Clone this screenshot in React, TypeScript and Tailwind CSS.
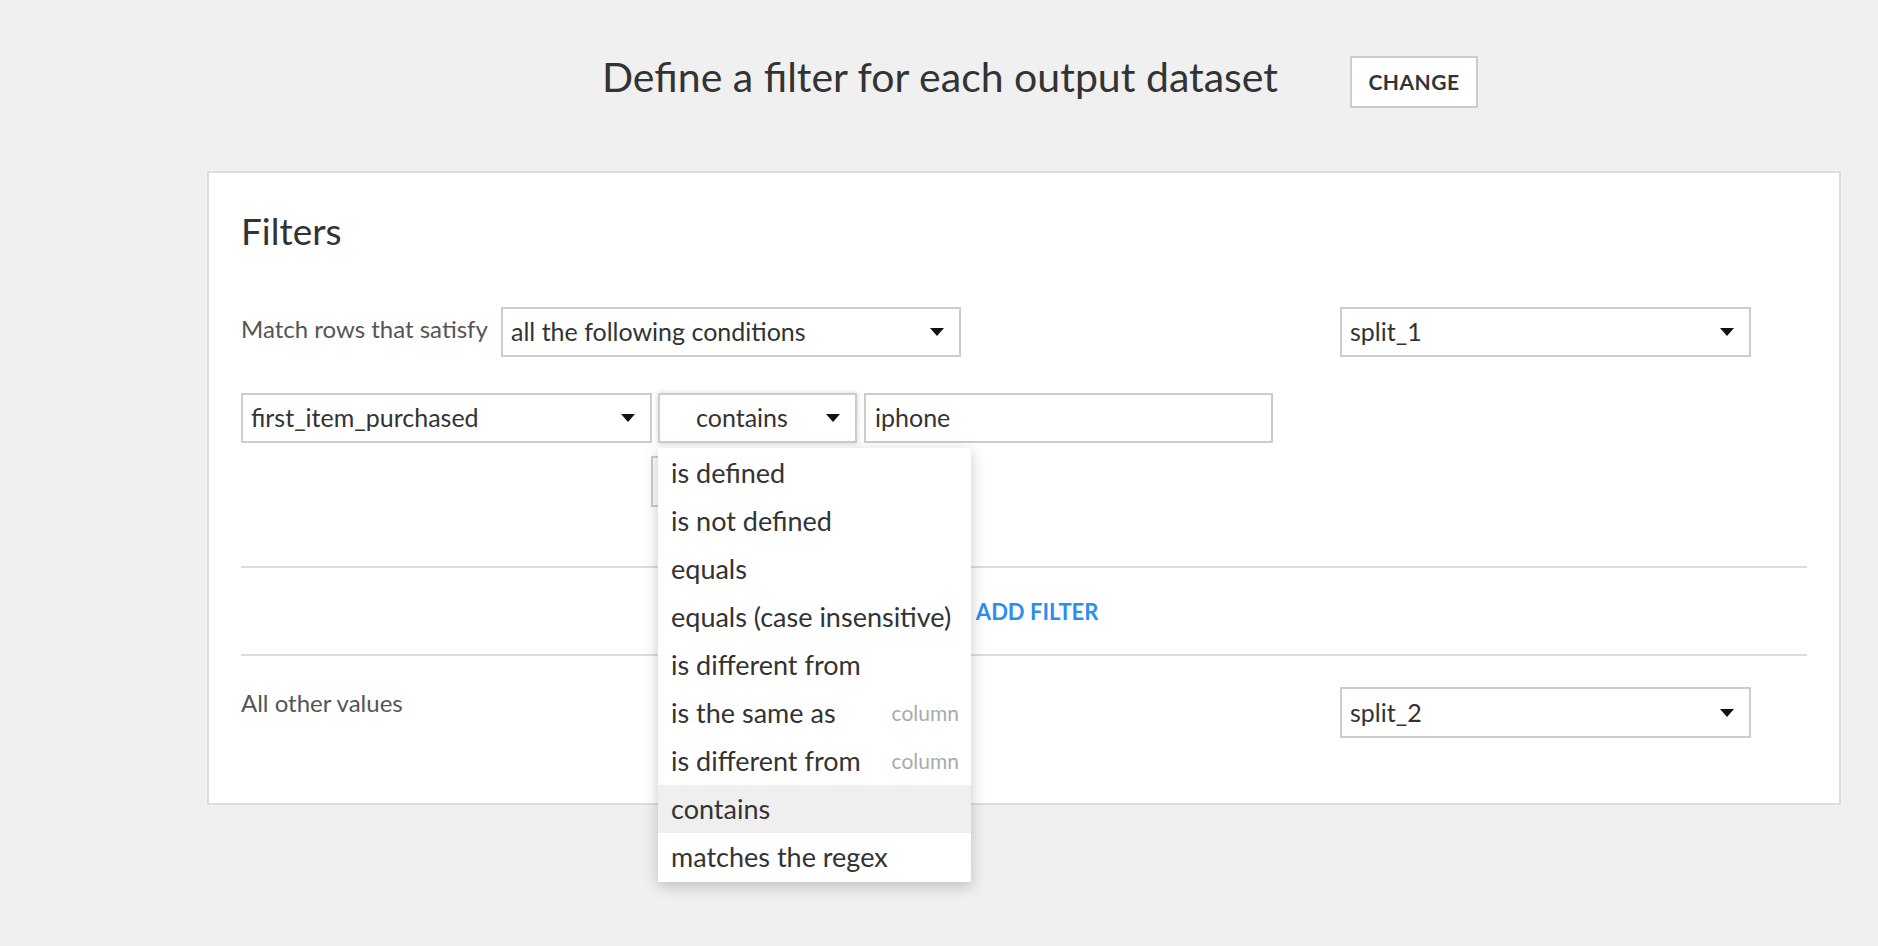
import React from "react";

const Caret = () => (
  <svg width="14" height="8" viewBox="0 0 14 8" className="shrink-0">
    <path d="M0 0 L14 0 L7 8 Z" fill="#111" />
  </svg>
);

const SelectBox = ({
  value,
  className,
}: {
  value: string;
  className: string;
}) => (
  <div
    className={`flex h-[50px] items-center justify-between border-2 border-[#cccccc] bg-white pl-[8px] pr-[15px] text-[25px] text-[#333] ${className}`}
  >
    <span>{value}</span>
    <Caret />
  </div>
);

const operators = [
  { label: "is defined" },
  { label: "is not defined" },
  { label: "equals" },
  { label: "equals (case insensitive)" },
  { label: "is different from" },
  { label: "is the same as", hint: "column" },
  { label: "is different from", hint: "column" },
  { label: "contains", active: true },
  { label: "matches the regex" },
];

export default function App() {
  return (
    <div className="min-h-screen bg-[#f0f0f0] pt-[56px] font-['Source_Sans_Pro','Lato',sans-serif] text-[#333]">
      {/* header */}
      <div className="flex h-[52px] items-center justify-center pl-[202px]">
        <h1 className="mb-[10px] text-[41px] leading-[52px] font-normal text-[#333]">
          Define a filter for each output dataset
        </h1>
        <button className="ml-[72px] h-[52px] w-[128px] border-2 border-[#cccccc] bg-white text-[21px] font-bold tracking-[0.5px] text-[#333]">
          CHANGE
        </button>
      </div>

      {/* panel */}
      <div className="ml-[207px] mt-[63px] w-[1634px] border-2 border-[#dddddd] bg-white px-[32px] pt-[38px] pb-[65px]">
        <h2 className="text-[37px] leading-[40px] font-normal text-[#333]">
          Filters
        </h2>

        <div className="mt-[56px] flex items-center">
          <span className="mb-[6px] w-[260px] text-[24px] text-[#555]">
            Match rows that satisfy
          </span>
          <SelectBox value="all the following conditions" className="h-[49px] w-[460px]" />
          <SelectBox value="split_1" className="ml-auto mr-[56px] h-[49px] w-[411px]" />
        </div>

        <div className="mt-[36px] flex items-center">
          <SelectBox value="first_item_purchased" className="w-[411px]" />
          <div className="relative ml-[6px]">
            <div className="flex h-[50px] w-[199px] items-center justify-between border-2 border-[#cccccc] bg-white pl-[36px] pr-[15px] text-[25px] text-[#333] shadow-[0_0_5px_rgba(0,0,0,0.18)]">
              <span>contains</span>
              <Caret />
            </div>
            {/* open dropdown */}
            <ul className="absolute left-0 top-[55px] z-10 w-[313px] bg-white py-[1px] shadow-[0_4px_14px_rgba(0,0,0,0.22)]">
              {operators.map((op, i) => (
                <li
                  key={i}
                  className={`flex h-[48px] items-center justify-between pl-[13px] pr-[12px] text-[27px] text-[#333] ${
                    op.active ? "bg-[#efefef]" : ""
                  }`}
                >
                  <span>{op.label}</span>
                  {op.hint && (
                    <span className="text-[21px] text-[#aaa]">{op.hint}</span>
                  )}
                </li>
              ))}
            </ul>
          </div>
          <div className="ml-[7px] flex h-[50px] w-[409px] items-center border-2 border-[#cccccc] bg-white pl-[9px] text-[25px] text-[#333]">
            iphone
          </div>
        </div>

        <div className="mt-[13px] flex">
          <div className="ml-[410px] h-[51px] w-[200px] border-2 border-[#cccccc] bg-white" />
        </div>

        <div className="mt-[59px] h-[2px] bg-[#dddddd]" />
        <div className="flex h-[86px] items-center justify-center">
          <button className="flex items-center gap-[10px] text-[22px] font-bold text-[#2b8ef0]">
            <span className="text-[28px] leading-none">+</span>
            ADD FILTER
          </button>
        </div>
        <div className="h-[2px] bg-[#dddddd]" />

        <div className="mt-[31px] flex items-start">
          <span className="pt-[1px] text-[24px] leading-[30px] text-[#555]">
            All other values
          </span>
          <SelectBox value="split_2" className="ml-auto mr-[56px] h-[51px] w-[411px]" />
        </div>
      </div>
    </div>
  );
}
